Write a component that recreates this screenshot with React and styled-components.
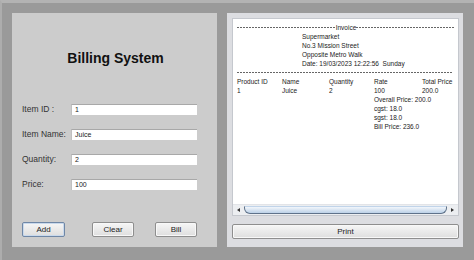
import React from "react"
import styled, { createGlobalStyle } from "styled-components"

const GlobalStyle = createGlobalStyle`
  html, body {
    margin: 0;
    padding: 0;
    background: #999999;
  }
  body {
    font-family: "Liberation Sans", Arial, sans-serif;
  }
`

const Frame = styled.div`
  width: 474px;
  height: 260px;
  box-sizing: border-box;
  background: #9a9a9a;
  border-top: 3px solid #b3b3b3;
  border-left: 2px solid #adadad;
  padding: 10px 11px 13px 10px;
  display: flex;
  gap: 10px;
`

const LeftPanel = styled.div`
  width: 205px;
  background: #cccccc;
  display: flex;
  flex-direction: column;
  padding: 37px 20px 0 10px;
  box-sizing: border-box;
`

const Title = styled.h1`
  margin: 0 0 37px 0;
  font-size: 14px;
  line-height: 16px;
  font-weight: bold;
  color: #111;
  text-align: center;
  padding-left: 12px;
`

const FormRow = styled.div`
  display: flex;
  align-items: center;
  height: 12px;
  margin-bottom: 13px;
`

const Label = styled.label`
  width: 49px;
  font-size: 8.5px;
  color: #333;
`

const Field = styled.div`
  width: 126px;
  height: 11px;
  box-sizing: border-box;
  background: #fff;
  border-top: 1px solid #a8a8a8;
  border-left: 1px solid #c0c0c0;
  font-size: 7px;
  line-height: 10px;
  padding-left: 3px;
  color: #222;
`

const ButtonRow = styled.div`
  display: flex;
  margin-top: 19px;
`

const Button = styled.button`
  width: ${p => p.$w || 42}px;
  height: 15px;
  margin-left: ${p => p.$ml || 0}px;
  padding: 0;
  box-sizing: border-box;
  border: 1px solid ${p => (p.$focus ? "#6f87a6" : "#8e8e8e")};
  border-radius: 2px;
  background: linear-gradient(#f6f6f6, #dedede);
  box-shadow: ${p => (p.$focus ? "inset 0 0 0 1px #c9d9ec" : "inset 0 0 0 1px #f8f8f8")};
  font-family: "Liberation Sans", Arial, sans-serif;
  font-size: 8px;
  color: #222;
`

const RightPanel = styled.div`
  width: 236px;
  background: #dcdde1;
  display: flex;
  flex-direction: column;
  padding: 5px 4px 0 5px;
  box-sizing: border-box;
`

const ScrollPane = styled.div`
  height: 198px;
  box-sizing: border-box;
  background: #fff;
  border: 1px solid #c5c8ce;
  display: flex;
  flex-direction: column;
`

const Invoice = styled.div`
  flex: 1;
  padding: 4px 3px 0 4px;
  font-size: 6.5px;
  line-height: 9px;
  color: #222;
  overflow: hidden;
`

const DashLine = styled.div`
  display: flex;
  align-items: center;
  height: 9px;
  margin-right: ${p => p.$mr || 0}px;
  &::before, &::after {
    content: "";
    flex: 1;
    height: 1px;
    background: repeating-linear-gradient(90deg, #666 0 2px, transparent 2px 3px);
  }
  &:empty::after {
    display: none;
  }
`

const HeadLine = styled.div`
  padding-left: 65px;
`

const Cols = styled.div`
  display: grid;
  grid-template-columns: 45px 47px 45px 48px auto;
`

const Summary = styled.div`
  padding-left: 137px;
`

const HScroll = styled.div`
  height: 10px;
  background: #eceef1;
  border-top: 1px solid #e2e4e8;
  display: flex;
  align-items: center;
  padding: 0 2px;
  gap: 2px;
`

const Arrow = styled.span`
  width: 0;
  height: 0;
  border-top: 2px solid transparent;
  border-bottom: 2px solid transparent;
  ${p => (p.$dir === "left" ? "border-right: 3px solid #333;" : "border-left: 3px solid #333;")}
  margin: 0 2px;
`

const Thumb = styled.div`
  flex: 1;
  height: 8px;
  box-sizing: border-box;
  border: 1px solid #5f728a;
  border-top-color: transparent;
  border-radius: 0 0 6px 6px;
  background: linear-gradient(#f2f6fb, #bcd1e8);
`

const PrintButton = styled(Button)`
  width: 227px;
  margin-top: 8px;
`

export default function App() {
  const fields = [
    ["Item ID :", "1"],
    ["Item Name:", "Juice"],
    ["Quantity:", "2"],
    ["Price:", "100"],
  ]
  return (
    <>
      <GlobalStyle />
      <Frame>
        <LeftPanel>
          <Title>Billing System</Title>
          {fields.map(([label, value]) => (
            <FormRow key={label}>
              <Label>{label}</Label>
              <Field>{value}</Field>
            </FormRow>
          ))}
          <ButtonRow>
            <Button $w={43} $focus>Add</Button>
            <Button $ml={27}>Clear</Button>
            <Button $ml={21}>Bill</Button>
          </ButtonRow>
        </LeftPanel>
        <RightPanel>
          <ScrollPane>
            <Invoice>
              <DashLine>Invoice</DashLine>
              <HeadLine>Supermarket</HeadLine>
              <HeadLine>No.3 Mission Street</HeadLine>
              <HeadLine>Opposite Metro Walk</HeadLine>
              <HeadLine>Date: 19/03/2023 12:22:56&nbsp;&nbsp;Sunday</HeadLine>
              <DashLine $mr={3} />
              <Cols>
                <span>Product ID</span>
                <span>Name</span>
                <span>Quantity</span>
                <span>Rate</span>
                <span>Total Price</span>
                <span>1</span>
                <span>Juice</span>
                <span>2</span>
                <span>100</span>
                <span>200.0</span>
              </Cols>
              <Summary>Overall Price: 200.0</Summary>
              <Summary>cgst: 18.0</Summary>
              <Summary>sgst: 18.0</Summary>
              <Summary>Bill Price: 236.0</Summary>
            </Invoice>
            <HScroll>
              <Arrow $dir="left" />
              <Thumb />
              <Arrow $dir="right" />
            </HScroll>
          </ScrollPane>
          <PrintButton>Print</PrintButton>
        </RightPanel>
      </Frame>
    </>
  )
}
